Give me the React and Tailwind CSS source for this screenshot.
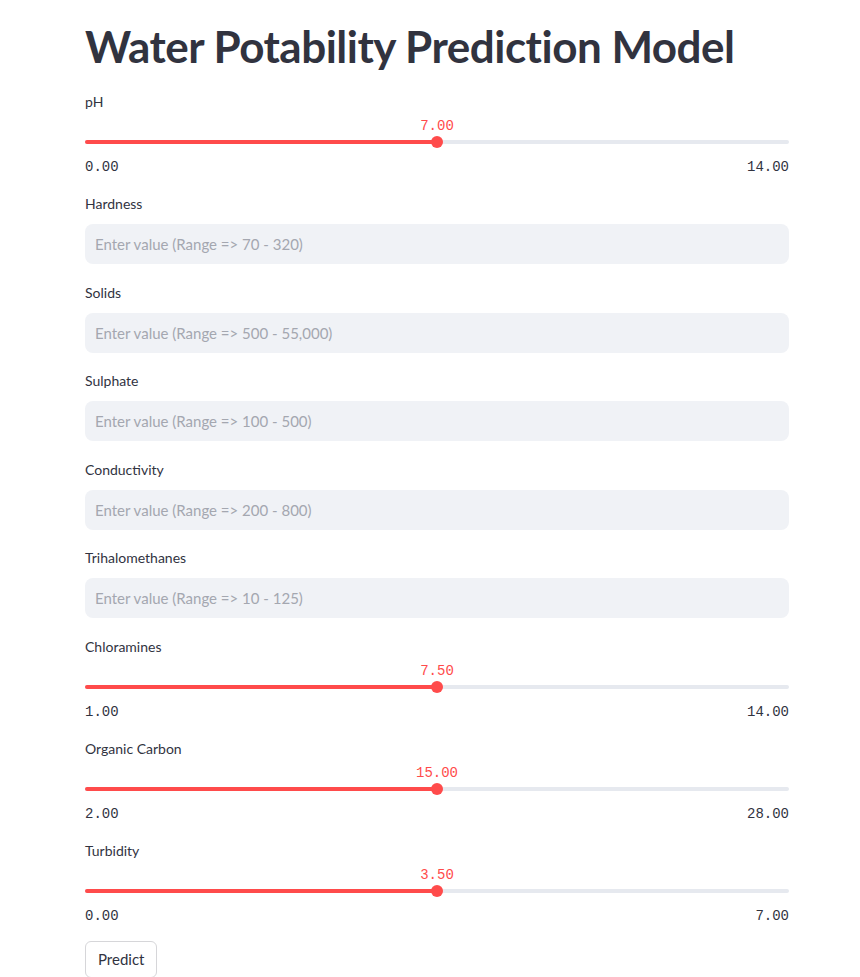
const FONT = { fontFamily: "Lato, 'Noto Sans', sans-serif" };
const MONO = { fontFamily: "'Liberation Mono', 'DejaVu Sans Mono', monospace" };

function Slider({ label, min, max, value }) {
  const pct = ((value - min) / (max - min)) * 100;
  return (
    <div className="flex flex-col mb-[17px]">
      <div className="h-[20px] text-[14px] leading-[20px] text-[#31333f]">{label}</div>
      <div className="relative h-[19px] mt-[4px]">
        <div
          className="absolute top-0 -translate-x-1/2 text-[14px] leading-[20px] text-[#ff4b4b]"
          style={{ ...MONO, left: `${pct}%` }}
        >
          {value.toFixed(2)}
        </div>
      </div>
      <div className="relative h-[14px] flex items-center">
        <div className="h-[4px] w-full rounded-full bg-[#e6e9ef] flex">
          <div className="h-full rounded-full bg-[#ff4b4b]" style={{ width: `${pct}%` }} />
        </div>
        <div
          className="absolute top-[1px] w-[12px] h-[12px] -translate-x-1/2 rounded-full bg-[#ff4b4b]"
          style={{ left: `${pct}%` }}
        />
      </div>
      <div
        className="mt-[8px] h-[20px] flex justify-between text-[14px] leading-[20px] text-[#31333f]"
        style={MONO}
      >
        <span>{min.toFixed(2)}</span>
        <span>{max.toFixed(2)}</span>
      </div>
    </div>
  );
}

function NumberField({ label, placeholder }) {
  return (
    <div className="flex flex-col mb-[18.5px]">
      <div className="h-[20px] text-[14px] leading-[20px] text-[#31333f]">{label}</div>
      <input
        className="mt-[10px] h-[40px] w-full rounded-[8px] bg-[#f0f2f6] px-[10px] text-[15px] text-[#31333f] placeholder:text-[#a4a7b0] outline-none"
        style={FONT}
        placeholder={placeholder}
      />
    </div>
  );
}

export default function App() {
  return (
    <div className="min-h-screen bg-white" style={FONT}>
      <div className="ml-[85px] w-[704px] pt-[20px] flex flex-col">
        <h1 className="h-[53px] text-[44px] leading-[53px] font-bold text-[#31333f] tracking-[-0.5px]">
          Water Potability Prediction Model
        </h1>
        <div className="mt-[19px] flex flex-col">
          <Slider label="pH" min={0} max={14} value={7} />
          <NumberField label="Hardness" placeholder="Enter value (Range => 70 - 320)" />
          <NumberField label="Solids" placeholder="Enter value (Range => 500 - 55,000)" />
          <NumberField label="Sulphate" placeholder="Enter value (Range => 100 - 500)" />
          <NumberField label="Conductivity" placeholder="Enter value (Range => 200 - 800)" />
          <NumberField label="Trihalomethanes" placeholder="Enter value (Range => 10 - 125)" />
          <Slider label="Chloramines" min={1} max={14} value={7.5} />
          <Slider label="Organic Carbon" min={2} max={28} value={15} />
          <Slider label="Turbidity" min={0} max={7} value={3.5} />
          <div className="-mt-[2px]">
            <button className="h-[37px] px-[12px] rounded-[6px] border border-[#d6d6d9] bg-white text-[15px] text-[#31333f]">
              Predict
            </button>
          </div>
        </div>
      </div>
    </div>
  );
}
